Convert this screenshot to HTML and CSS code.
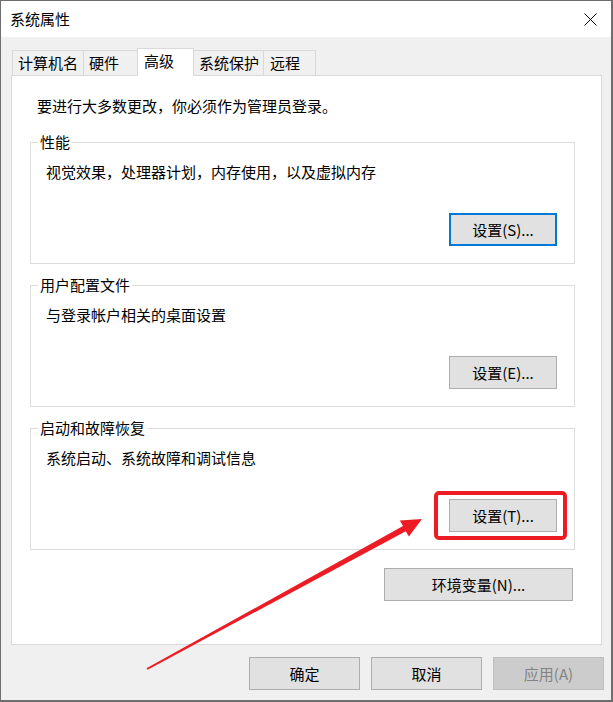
FILE: index.html
```html
<!DOCTYPE html>
<html lang="zh-CN">
<head>
<meta charset="utf-8">
<title>系统属性</title>
<link rel="stylesheet" href="styles.css">
</head>
<body>
<div class="window">
  <div class="titlebar">
    <span class="title">系统属性</span>
    <svg class="close" width="13" height="13" viewBox="0 0 13 13"><path d="M0.5 0.5 L12.5 12.5 M12.5 0.5 L0.5 12.5" stroke="#000" stroke-width="1" fill="none"/></svg>
  </div>
  <div class="body">
    <div class="tabs">
      <div class="tab tab-first">计算机名</div>
      <div class="tab">硬件</div>
      <div class="tab tab-active">高级</div>
      <div class="tab">系统保护</div>
      <div class="tab tab-last">远程</div>
    </div>
    <div class="panel">
      <p class="notice">要进行大多数更改，你必须作为管理员登录。</p>
      <fieldset class="group group-first">
        <legend class="legend">性能</legend>
        <p class="desc">视觉效果，处理器计划，内存使用，以及虚拟内存</p>
        <div class="group-actions"><button class="btn btn-set btn-focus">设置(S)...</button></div>
      </fieldset>
      <fieldset class="group">
        <legend class="legend">用户配置文件</legend>
        <p class="desc">与登录帐户相关的桌面设置</p>
        <div class="group-actions"><button class="btn btn-set">设置(E)...</button></div>
      </fieldset>
      <fieldset class="group">
        <legend class="legend">启动和故障恢复</legend>
        <p class="desc">系统启动、系统故障和调试信息</p>
        <div class="group-actions"><button class="btn btn-set">设置(T)...</button></div>
      </fieldset>
      <div class="env-row"><button class="btn btn-env">环境变量(N)...</button></div>
    </div>
    <div class="footer">
      <button class="btn btn-footer">确定</button>
      <button class="btn btn-footer">取消</button>
      <button class="btn btn-footer btn-disabled">应用(A)</button>
    </div>
  </div>
  <svg class="annotation" width="613" height="702" viewBox="0 0 613 702">
    <rect x="436" y="493" width="129" height="45" rx="3" ry="3" fill="none" stroke="#ed1c24" stroke-width="4"/>
    <polygon points="146.5,668.3 403,526 399.8,520.5 422,519 408.9,536.6 405.8,531.2 147.6,669.8" fill="#ed1c24"/>
  </svg>
</div>
</body>
</html>
```

FILE: styles.css
```css
* { box-sizing: border-box; }
html, body { margin: 0; padding: 0; background: #ffffff; }
body {
  font-family: "Noto Sans CJK SC", "Noto Sans", sans-serif;
  font-size: 15px;
  line-height: 20px;
  color: #000;
}
.window {
  position: relative;
  width: 613px;
  height: 702px;
  background: #f0f0f0;
  border-top: 1px solid #6e6e6e;
  border-left: 1px solid #6e6e6e;
  border-right: 2px solid #6e6e6e;
  border-bottom: 2px solid #6e6e6e;
  display: flex;
  flex-direction: column;
}
.titlebar {
  height: 36px;
  background: #ffffff;
  display: flex;
  align-items: center;
  padding-left: 9px;
  padding-right: 14px;
}
.title { font-size: 15px; }
.close { margin-left: auto; display: block; }
.body {
  padding: 11px 9px 0 10px;
  display: flex;
  flex-direction: column;
}
.tabs {
  display: flex;
  align-items: flex-end;
  height: 27px;
  margin-left: 1px;
  position: relative;
  z-index: 1;
}
.tab {
  flex: none;
  height: 25px;
  min-width: 55px;
  padding: 0 4px 0 5px;
  border: 1px solid #d9d9d9;
  border-bottom: none;
  background: #f0f0f0;
  display: flex;
  align-items: center;
  margin-left: -1px;
  white-space: nowrap;
}
.tab-first { margin-left: 0; padding-right: 5px; }
.tab-last { min-width: 53px; padding-left: 6px; }
.tab-active {
  height: 28px;
  min-width: 57px;
  padding-left: 6px;
  background: #ffffff;
  margin-bottom: -1px;
  padding-bottom: 3px;
  position: relative;
  z-index: 2;
}
.panel {
  height: 570px;
  background: #ffffff;
  border: 1px solid #d9d9d9;
  padding: 20px 0 0 18px;
}
.notice {
  margin: 0;
  padding-left: 7px;
  height: 20px;
}
.group {
  width: 545px;
  margin: 11px 0 0 0;
  padding: 0 17px 17px 15px;
  border: 1px solid #dcdcdc;
  min-width: 0;
}
.group-first { margin-top: 16px; }
.legend {
  margin-left: -8px;
  padding: 0 2px;
  line-height: 20px;
}
.desc {
  margin: 10px 0 0 0;
  height: 20px;
}
.group-actions {
  display: flex;
  justify-content: flex-end;
  margin-top: 31px;
}
.btn {
  font-family: "Noto Sans CJK SC", "Noto Sans", sans-serif;
  font-size: 15px;
  line-height: 20px;
  color: #000;
  background: #e1e1e1;
  border: 1px solid #adadad;
  padding: 0;
  margin: 0;
  display: flex;
  align-items: center;
  justify-content: center;
}
.btn-set { width: 108px; height: 33px; }
.btn-focus { border: 2px solid #0078d7; }
.env-row {
  width: 545px;
  display: flex;
  justify-content: flex-end;
  padding-right: 2px;
  margin-top: 18px;
}
.btn-env { width: 189px; height: 33px; }
.footer {
  display: flex;
  justify-content: flex-end;
  gap: 11px;
  margin-top: 12px;
  margin-right: -2px;
}
.btn-footer { width: 111px; height: 33px; }
.btn-disabled {
  background: #cccccc;
  border-color: #bfbfbf;
  color: #838383;
}
.annotation {
  position: absolute;
  left: -1px;
  top: -1px;
  pointer-events: none;
  z-index: 5;
}
```
